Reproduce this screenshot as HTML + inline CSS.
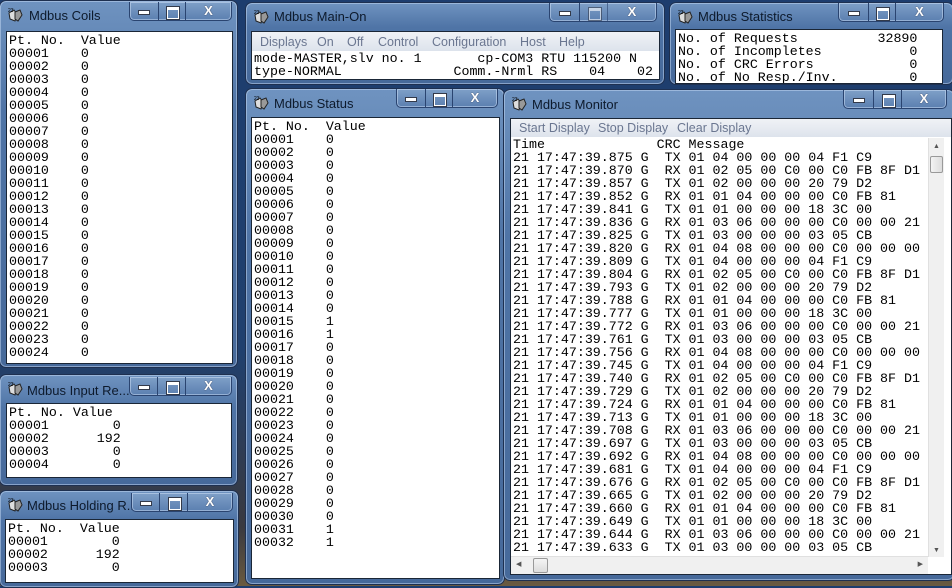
<!DOCTYPE html>
<html><head><meta charset="utf-8"><style>
*{margin:0;padding:0;box-sizing:border-box}
body{width:952px;height:586px;overflow:hidden;position:relative;background:linear-gradient(180deg,#1d3d6e 0%,#20406e 60%,#3a3a40 90%,#6a5a40 100%);font-family:"Liberation Sans",sans-serif}
.win{position:absolute;border:1px solid #1e3050;border-radius:7px;background:linear-gradient(180deg,#6f93c0 0%,#4f74a6 30%,#46699a 100%);box-shadow:inset 0 0 0 1px rgba(200,220,245,.5)}
.title{position:absolute;left:26px;top:7px;font-size:13px;color:#0d1a2c;white-space:nowrap}
.icon{position:absolute;left:7px;top:6px;width:16px;height:16px}
.btns{position:absolute;top:1px;height:19px;border:1px solid #2a4470;border-top:none;border-radius:0 0 5px 5px;display:flex;background:linear-gradient(180deg,#7fa0c8,#5b7fb0);box-shadow:inset 0 0 0 1px rgba(220,235,255,.45)}
.btns div{height:100%;border-right:1px solid #2a4470;position:relative;color:#fff;font-size:13px;font-weight:bold;text-align:center;line-height:17px}
.btns div:last-child{border-right:none}
.mn:after{content:"";position:absolute;left:50%;margin-left:-5px;top:9px;width:10px;height:3px;background:#fff;box-shadow:0 0 0 1px #333a4a}
.mx:after{content:"";position:absolute;left:50%;margin-left:-5px;top:5px;width:10px;height:8px;border:1px solid #fff;border-top-width:3px;box-shadow:0 0 0 1px #333a4a}
.cl{text-shadow:0 0 1px #223}
.cli{position:absolute;background:#fff;border:1px solid #1a2636;font-family:"Liberation Mono",monospace;font-size:13.3px;line-height:13px;color:#000;white-space:pre;overflow:hidden}
.menu{position:absolute;background:linear-gradient(180deg,#f0f2f6,#dde3ec);font-size:12.5px;color:#6a7690;white-space:pre;border:1px solid #1a2636}
.menu span{position:absolute;top:3px}
</style></head><body>
<svg width="0" height="0" style="position:absolute"><defs><symbol id="ic" viewBox="0 0 16 16"><path d="M2 6 L7 3 L10 7 L8 14 L3 12Z" fill="#ddd" stroke="#222"/><path d="M8 5 L13 3 L15 8 L11 14 L8 12Z" fill="#999" stroke="#222"/><text x="1" y="5" font-size="5" fill="#000">23</text></symbol></defs></svg>

<!-- Coils -->
<div class="win" style="left:-1px;top:0;width:239px;height:368px">
<svg class="icon"><use href="#ic"/></svg><div class="title" style="left:29px">Mdbus Coils</div>
<div class="btns" style="left:129px;width:103px"><div class="mn" style="width:29px"></div><div class="mx" style="width:27px"></div><div class="cl" style="width:45px">X</div></div>
<div class="cli" style="left:6px;top:30px;width:227px;height:333px;padding:2px 0 0 2px">Pt. No.  Value
00001    0
00002    0
00003    0
00004    0
00005    0
00006    0
00007    0
00008    0
00009    0
00010    0
00011    0
00012    0
00013    0
00014    0
00015    0
00016    0
00017    0
00018    0
00019    0
00020    0
00021    0
00022    0
00023    0
00024    0</div></div>

<!-- Input -->
<div class="win" style="left:-1px;top:374px;width:239px;height:112px">
<svg class="icon"><use href="#ic"/></svg><div class="title" style="left:27px;top:8px">Mdbus Input Re...</div>
<div class="btns" style="left:129px;width:103px;top:2px"><div class="mn" style="width:28px"></div><div class="mx" style="width:28px"></div><div class="cl" style="width:45px">X</div></div>
<div class="cli" style="left:6px;top:28px;width:226px;height:75px;padding:2px 0 0 2px">Pt. No. Value
00001        0
00002      192
00003        0
00004        0</div></div>

<!-- Holding -->
<div class="win" style="left:-1px;top:490px;width:240px;height:98px">
<svg class="icon"><use href="#ic"/></svg><div class="title" style="left:27px;top:7px">Mdbus Holding R...</div>
<div class="btns" style="left:131px;width:102px;top:2px"><div class="mn" style="width:28px"></div><div class="mx" style="width:28px"></div><div class="cl" style="width:44px">X</div></div>
<div class="cli" style="left:5px;top:28px;width:229px;height:64px;padding:2px 0 0 2px">Pt. No.  Value
00001        0
00002      192
00003        0</div></div>

<!-- Main-On -->
<div class="win" style="left:245px;top:2px;width:420px;height:83px">
<svg class="icon"><use href="#ic"/></svg><div class="title" style="left:28px;top:6px">Mdbus Main-On</div>
<div class="btns" style="left:303px;width:108px;top:0"><div class="mn" style="width:30px"></div><div class="mx" style="width:28px;opacity:.6"></div><div class="cl" style="width:48px">X</div></div>
<div class="menu" style="left:5px;top:28px;width:409px;height:21px"><span style="left:8px">Displays</span><span style="left:65px">On</span><span style="left:95px">Off</span><span style="left:126px">Control</span><span style="left:180px">Configuration</span><span style="left:268px">Host</span><span style="left:307px">Help</span></div>
<div class="cli" style="left:5px;top:48px;width:409px;height:29px;border-top:none;padding:1px 0 0 2px">mode-MASTER,slv no. 1       cp-COM3 RTU 115200 N
type-NORMAL              Comm.-Nrml RS    04    02</div></div>

<!-- Statistics -->
<div class="win" style="left:669px;top:2px;width:285px;height:83px">
<svg class="icon"><use href="#ic"/></svg><div class="title" style="left:28px;top:6px">Mdbus Statistics</div>
<div class="btns" style="left:168px;width:106px;top:0"><div class="mn" style="width:30px"></div><div class="mx" style="width:27px"></div><div class="cl" style="width:47px">X</div></div>
<div class="cli" style="left:5px;top:26px;width:268px;height:55px;padding:2px 0 0 2px">No. of Requests          32890
No. of Incompletes           0
No. of CRC Errors            0
No. of No Resp./Inv.         0</div></div>

<!-- Status -->
<div class="win" style="left:245px;top:88px;width:260px;height:497px">
<svg class="icon"><use href="#ic"/></svg><div class="title" style="left:28px;top:7px">Mdbus Status</div>
<div class="btns" style="left:150px;width:102px;top:0"><div class="mn" style="width:29px"></div><div class="mx" style="width:27px"></div><div class="cl" style="width:44px">X</div></div>
<div class="cli" style="left:5px;top:28px;width:249px;height:462px;padding:2px 0 0 2px">Pt. No.  Value
00001    0
00002    0
00003    0
00004    0
00005    0
00006    0
00007    0
00008    0
00009    0
00010    0
00011    0
00012    0
00013    0
00014    0
00015    1
00016    1
00017    0
00018    0
00019    0
00020    0
00021    0
00022    0
00023    0
00024    0
00025    0
00026    0
00027    0
00028    0
00029    0
00030    0
00031    1
00032    1</div></div>

<!-- Monitor -->
<div class="win" style="left:503px;top:89px;width:452px;height:492px">
<svg class="icon"><use href="#ic"/></svg><div class="title" style="left:28px;top:7px">Mdbus Monitor</div>
<div class="btns" style="left:339px;width:104px;top:0"><div class="mn" style="width:30px"></div><div class="mx" style="width:28px"></div><div class="cl" style="width:44px">X</div></div>
<div class="menu" style="left:6px;top:28px;width:442px;height:20px"><span style="left:8px;top:2px">Start Display</span><span style="left:87px;top:2px">Stop Display</span><span style="left:166px;top:2px">Clear Display</span></div>
<div class="cli" style="left:6px;top:47px;width:442px;height:438px;border-top:none;padding:1px 0 0 2px">Time              CRC Message
21 17:47:39.875 G  TX 01 04 00 00 00 04 F1 C9
21 17:47:39.870 G  RX 01 02 05 00 C0 00 C0 FB 8F D1
21 17:47:39.857 G  TX 01 02 00 00 00 20 79 D2
21 17:47:39.852 G  RX 01 01 04 00 00 00 C0 FB 81
21 17:47:39.841 G  TX 01 01 00 00 00 18 3C 00
21 17:47:39.836 G  RX 01 03 06 00 00 00 C0 00 00 21
21 17:47:39.825 G  TX 01 03 00 00 00 03 05 CB
21 17:47:39.820 G  RX 01 04 08 00 00 00 C0 00 00 00
21 17:47:39.809 G  TX 01 04 00 00 00 04 F1 C9
21 17:47:39.804 G  RX 01 02 05 00 C0 00 C0 FB 8F D1
21 17:47:39.793 G  TX 01 02 00 00 00 20 79 D2
21 17:47:39.788 G  RX 01 01 04 00 00 00 C0 FB 81
21 17:47:39.777 G  TX 01 01 00 00 00 18 3C 00
21 17:47:39.772 G  RX 01 03 06 00 00 00 C0 00 00 21
21 17:47:39.761 G  TX 01 03 00 00 00 03 05 CB
21 17:47:39.756 G  RX 01 04 08 00 00 00 C0 00 00 00
21 17:47:39.745 G  TX 01 04 00 00 00 04 F1 C9
21 17:47:39.740 G  RX 01 02 05 00 C0 00 C0 FB 8F D1
21 17:47:39.729 G  TX 01 02 00 00 00 20 79 D2
21 17:47:39.724 G  RX 01 01 04 00 00 00 C0 FB 81
21 17:47:39.713 G  TX 01 01 00 00 00 18 3C 00
21 17:47:39.708 G  RX 01 03 06 00 00 00 C0 00 00 21
21 17:47:39.697 G  TX 01 03 00 00 00 03 05 CB
21 17:47:39.692 G  RX 01 04 08 00 00 00 C0 00 00 00
21 17:47:39.681 G  TX 01 04 00 00 00 04 F1 C9
21 17:47:39.676 G  RX 01 02 05 00 C0 00 C0 FB 8F D1
21 17:47:39.665 G  TX 01 02 00 00 00 20 79 D2
21 17:47:39.660 G  RX 01 01 04 00 00 00 C0 FB 81
21 17:47:39.649 G  TX 01 01 00 00 00 18 3C 00
21 17:47:39.644 G  RX 01 03 06 00 00 00 C0 00 00 21
21 17:47:39.633 G  TX 01 03 00 00 00 03 05 CB</div>
<div style="position:absolute;left:424px;top:48px;width:16px;height:419px;background:#f0f0f0;border-left:1px solid #e0e0e0"><div style="position:absolute;left:1px;top:18px;width:13px;height:17px;border:1px solid #999;border-radius:2px;background:linear-gradient(90deg,#f4f4f4,#dcdcdc)"></div><div style="position:absolute;left:4px;top:5px;font-size:7px;color:#555">▲</div><div style="position:absolute;left:4px;bottom:3px;font-size:7px;color:#555">▼</div></div>
<div style="position:absolute;left:7px;top:466px;width:417px;height:18px;background:#f0f0f0;border-top:1px solid #e0e0e0"><div style="position:absolute;left:22px;top:1px;width:15px;height:15px;border:1px solid #999;border-radius:2px;background:linear-gradient(180deg,#f4f4f4,#dcdcdc)"></div><div style="position:absolute;left:5px;top:3px;font-size:7px;color:#555">◀</div><div style="position:absolute;right:5px;top:3px;font-size:7px;color:#555">▶</div></div>
</div>
</body></html>
